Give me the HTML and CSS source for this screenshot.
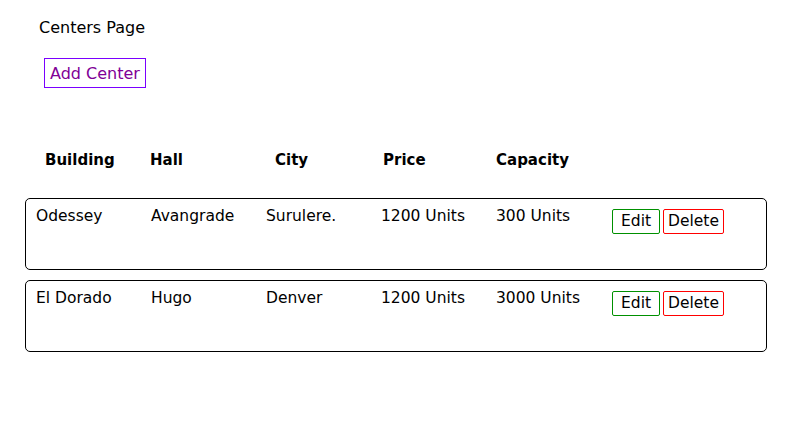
FILE: index.html
```html
<!DOCTYPE html>
<html>
<head>
<meta charset="utf-8">
<link rel="stylesheet" href="styles.css">
</head>
<body>
<div class="page">
  <h1 class="title">Centers Page</h1>
  <a class="add-btn" href="#">Add Center</a>
  <div class="head">
    <span>Building</span>
    <span>Hall</span>
    <span>City</span>
    <span>Price</span>
    <span>Capacity</span>
  </div>
  <div class="list">
    <div class="row">
      <span class="cell">Odessey</span>
      <span class="cell">Avangrade</span>
      <span class="cell">Surulere.</span>
      <span class="cell">1200 Units</span>
      <span class="cell">300 Units</span>
      <span class="actions"><button class="btn btn-edit">Edit</button><button class="btn btn-delete">Delete</button></span>
    </div>
    <div class="row">
      <span class="cell">El Dorado</span>
      <span class="cell">Hugo</span>
      <span class="cell">Denver</span>
      <span class="cell">1200 Units</span>
      <span class="cell">3000 Units</span>
      <span class="actions"><button class="btn btn-edit">Edit</button><button class="btn btn-delete">Delete</button></span>
    </div>
  </div>
</div>
</body>
</html>
```
FILE: styles.css
```css
* { box-sizing: border-box; }
body {
  margin: 0;
  font-family: "DejaVu Sans", sans-serif;
  font-size: 15.5px;
  color: #000;
  background: #fff;
}
.page {
  padding: 17px 24px 0 25px;
}
.title {
  margin: 0 0 0 14px;
  font-size: 16px;
  font-weight: normal;
  line-height: 22px;
}
.add-btn {
  display: inline-block;
  margin: 19px 0 0 19px;
  height: 30px;
  padding: 0 5px;
  font-size: 16px;
  line-height: 29px;
  border: 1px solid #7a00ff;
  color: #800096;
  text-decoration: none;
}
.head {
  display: grid;
  grid-template-columns: 105px 125px 108px 113px auto;
  padding-left: 20px;
  margin-top: 61px;
  font-size: 15px;
  font-weight: bold;
  line-height: 22px;
}
.list {
  margin-top: 27px;
  display: flex;
  flex-direction: column;
  gap: 10px;
}
.row {
  display: flex;
  align-items: flex-start;
  height: 72px;
  border: 1px solid #000;
  border-radius: 5px;
  padding: 7px 10px;
}
.cell {
  width: 115px;
  line-height: 20px;
}
.actions {
  display: flex;
  gap: 3px;
  margin-top: 3px;
  margin-left: 1px;
}
.btn {
  font-family: inherit;
  font-size: 15.5px;
  background: #fff;
  color: #000;
  height: 25px;
  line-height: 23px;
  border-radius: 2px;
  border-width: 1px;
  border-style: solid;
}
.btn-edit {
  padding: 0 8px;
  border-color: #009000;
}
.btn-delete {
  padding: 0 4px;
  border-color: #ff0000;
}
```
